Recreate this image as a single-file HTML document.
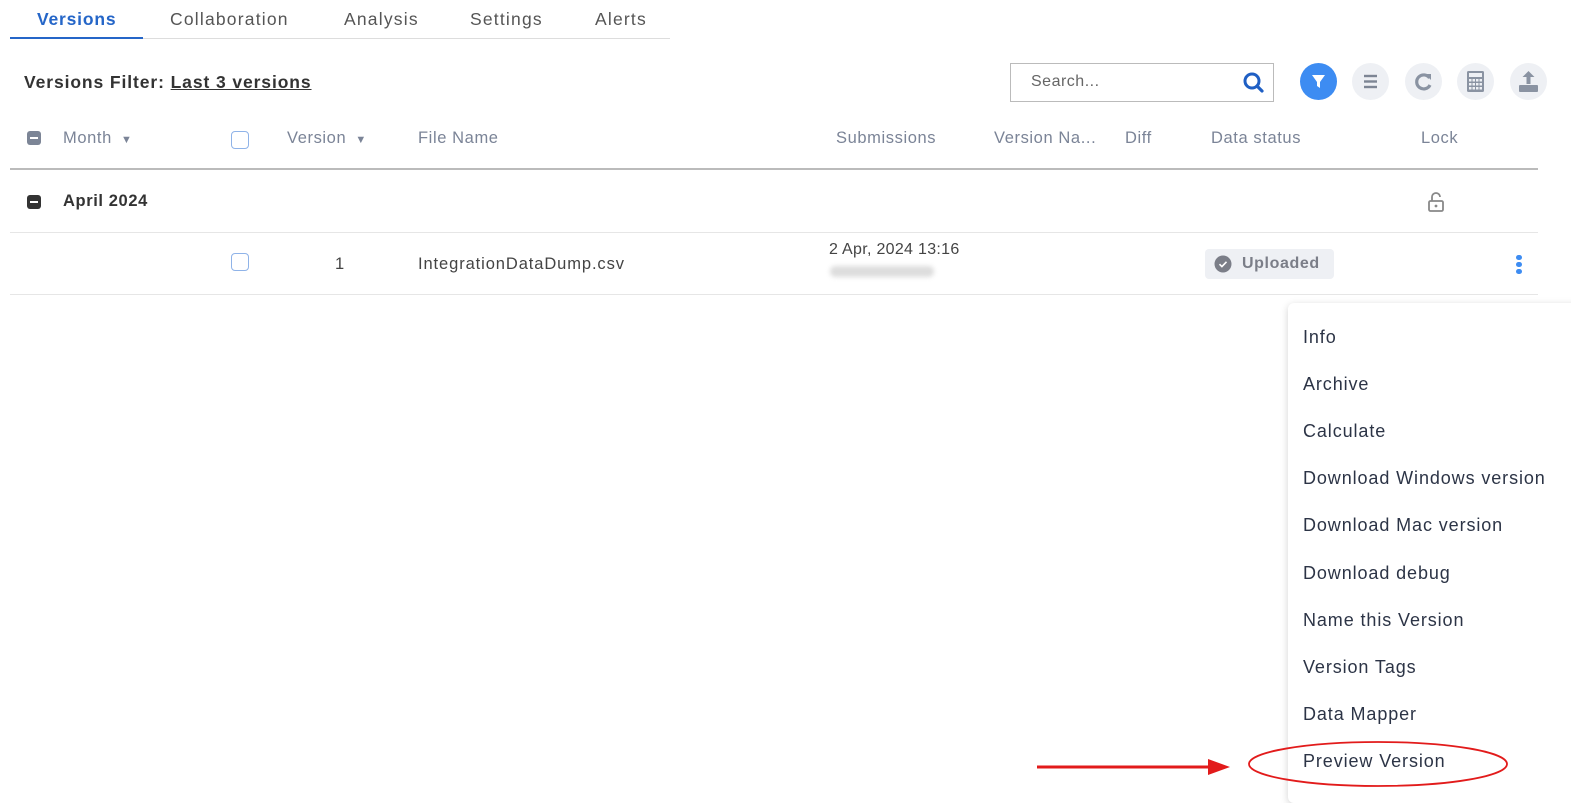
<!DOCTYPE html>
<html><head><meta charset="utf-8"><style>
*{margin:0;padding:0;box-sizing:border-box}
body{width:1571px;height:793px;background:#fff;font-family:"Liberation Sans",sans-serif;position:relative;overflow:hidden;color:#333}
.a{position:absolute;white-space:nowrap}
.tab{font-size:17.5px;color:#555;top:9px;letter-spacing:1.2px}
.hd{font-size:16.5px;color:#7b8497;top:129px;letter-spacing:0.6px}
.cb{position:absolute;width:18px;height:18px;border:1.5px solid #8fb3e8;border-radius:4px}
.ic{position:absolute;width:37px;height:37px;border-radius:50%;background:#eef0f4;top:63px}
.mi{position:absolute;left:1303px;font-size:18px;color:#2c3446;letter-spacing:0.9px}
.line{position:absolute;left:10px;width:1528px;height:1px;background:#e6e6e6}
</style></head><body>
<div class="a tab" style="left:37px;color:#2566c8;font-weight:bold;letter-spacing:0.8px">Versions</div>
<div class="a tab" style="left:170px">Collaboration</div>
<div class="a tab" style="left:344px">Analysis</div>
<div class="a tab" style="left:470px">Settings</div>
<div class="a tab" style="left:595px">Alerts</div>
<div class="a" style="left:10px;top:38px;width:660px;height:1px;background:#ddd"></div>
<div class="a" style="left:10px;top:37px;width:133px;height:2px;background:#2566c8"></div>

<div class="a" style="left:24px;top:72px;font-size:17.5px;font-weight:bold;color:#333;letter-spacing:0.9px">Versions Filter: <span style="text-decoration:underline">Last 3 versions</span></div>

<div class="a" style="left:1010px;top:63px;width:264px;height:39px;border:1px solid #bbb"></div>
<div class="a" style="left:1031px;top:73px;font-size:16px;color:#666;letter-spacing:0.5px">Search...</div>
<svg class="a" style="left:1242px;top:72px" width="24" height="22" viewBox="0 0 24 22"><circle cx="10" cy="9" r="7" fill="none" stroke="#1f5fc4" stroke-width="3"/><line x1="15" y1="14" x2="20" y2="19" stroke="#1f5fc4" stroke-width="3.2" stroke-linecap="round"/></svg>

<div class="ic" style="left:1300px;background:#3d8cf2"><svg width="37" height="37"><path d="M12 12h13l-5 7v6l-3-2v-4z" fill="#fff"/></svg></div>
<div class="ic" style="left:1352px"><svg width="37" height="37"><g stroke="#7d8594" stroke-width="2.4"><line x1="12" y1="13" x2="25" y2="13"/><line x1="12" y1="18.5" x2="25" y2="18.5"/><line x1="12" y1="24" x2="25" y2="24"/></g></svg></div>
<div class="ic" style="left:1405px"><svg width="37" height="37"><path d="M24.5 15 A7 7 0 1 0 25 22" fill="none" stroke="#8a93a2" stroke-width="3.2"/><path d="M20 11l6 0l0 6z" fill="#8a93a2"/></svg></div>
<div class="ic" style="left:1457px"><svg width="37" height="37"><rect x="10" y="8" width="17" height="21" rx="1.5" fill="#8a93a2"/><rect x="12" y="10" width="13" height="4" fill="#eef0f4"/><g fill="#eef0f4"><rect x="12" y="16" width="2.5" height="2.5"/><rect x="15.5" y="16" width="2.5" height="2.5"/><rect x="19" y="16" width="2.5" height="2.5"/><rect x="22.5" y="16" width="2.5" height="2.5"/><rect x="12" y="20" width="2.5" height="2.5"/><rect x="15.5" y="20" width="2.5" height="2.5"/><rect x="19" y="20" width="2.5" height="2.5"/><rect x="22.5" y="20" width="2.5" height="2.5"/><rect x="12" y="24" width="2.5" height="2.5"/><rect x="15.5" y="24" width="2.5" height="2.5"/><rect x="19" y="24" width="2.5" height="2.5"/><rect x="22.5" y="24" width="2.5" height="2.5"/></g></svg></div>
<div class="ic" style="left:1510px"><svg width="37" height="37"><path d="M18.5 8l-6 6h4v7h4v-7h4z" fill="#8a93a2"/><rect x="9" y="22" width="19" height="7" rx="1" fill="#8a93a2"/></svg></div>

<div class="a" style="left:27px;top:131px;width:14px;height:14px;background:#7c8596;border-radius:3px"><div style="position:absolute;left:3px;top:6px;width:8px;height:2px;background:#fff"></div></div>
<div class="a hd" style="left:63px">Month <span style="font-size:11px;margin-left:4px">▼</span></div>
<div class="cb" style="left:231px;top:131px"></div>
<div class="a hd" style="left:287px">Version <span style="font-size:11px;margin-left:4px">▼</span></div>
<div class="a hd" style="left:418px">File Name</div>
<div class="a hd" style="left:836px">Submissions</div>
<div class="a hd" style="left:994px">Version Na...</div>
<div class="a hd" style="left:1125px">Diff</div>
<div class="a hd" style="left:1211px">Data status</div>
<div class="a hd" style="left:1421px">Lock</div>
<div class="line" style="top:168px;height:2px;background:#bbb"></div>

<div class="a" style="left:27px;top:195px;width:14px;height:14px;background:#333;border-radius:3px"><div style="position:absolute;left:3px;top:6px;width:8px;height:2px;background:#fff"></div></div>
<div class="a" style="left:63px;top:192px;font-size:16.5px;font-weight:bold;color:#333;letter-spacing:0.6px">April 2024</div>
<svg class="a" style="left:1427px;top:191px" width="18" height="22" viewBox="0 0 18 22"><path d="M5 10V6a4 4 0 0 1 8 0" fill="none" stroke="#888" stroke-width="1.8"/><rect x="2" y="10" width="14" height="10" rx="1.5" fill="none" stroke="#888" stroke-width="1.8"/><circle cx="9" cy="15" r="1.4" fill="#888"/></svg>
<div class="line" style="top:232px"></div>

<div class="cb" style="left:231px;top:253px"></div>
<div class="a" style="left:335px;top:255px;font-size:16.5px;color:#444">1</div>
<div class="a" style="left:418px;top:255px;font-size:16.5px;color:#444;letter-spacing:0.9px">IntegrationDataDump.csv</div>
<div class="a" style="left:829px;top:241px;font-size:16px;color:#444;letter-spacing:0.3px">2 Apr, 2024 13:16</div>
<div class="a" style="left:830px;top:266px;width:104px;height:11px;background:#ddd;border-radius:5px;filter:blur(2.5px)"></div>
<div class="a" style="left:1205px;top:249px;width:129px;height:30px;background:#eef0f4;border-radius:4px"></div>
<svg class="a" style="left:1214px;top:255px" width="18" height="18"><circle cx="9" cy="9" r="8.5" fill="#7b7e88"/><path d="M5.5 9.2l2.4 2.4 4.6-4.8" fill="none" stroke="#fff" stroke-width="1.6"/></svg>
<div class="a" style="left:1242px;top:255px;font-size:16px;font-weight:bold;color:#7b7e88;letter-spacing:0.6px">Uploaded</div>
<div class="a" style="left:1516px;top:255px;width:6px;height:19px"><div style="width:6px;height:5px;background:#3d8cf2;border-radius:3px;margin-bottom:2px"></div><div style="width:6px;height:5px;background:#3d8cf2;border-radius:3px;margin-bottom:2px"></div><div style="width:6px;height:5px;background:#3d8cf2;border-radius:3px"></div></div>
<div class="line" style="top:294px"></div>

<div class="a" style="left:1288px;top:303px;width:300px;height:500px;background:#fff;border-radius:6px;box-shadow:0 2px 8px rgba(0,0,0,.18)"></div>
<div class="mi" style="top:327px">Info</div>
<div class="mi" style="top:374px">Archive</div>
<div class="mi" style="top:421px">Calculate</div>
<div class="mi" style="top:468px">Download Windows version</div>
<div class="mi" style="top:515px">Download Mac version</div>
<div class="mi" style="top:563px">Download debug</div>
<div class="mi" style="top:610px">Name this Version</div>
<div class="mi" style="top:657px">Version Tags</div>
<div class="mi" style="top:704px">Data Mapper</div>
<div class="mi" style="top:751px">Preview Version</div>

<svg class="a" style="left:0;top:0" width="1571" height="793"><line x1="1037" y1="767" x2="1210" y2="767" stroke="#e21b1b" stroke-width="3"/><path d="M1230 767l-22-8v16z" fill="#e21b1b"/><ellipse cx="1378" cy="764" rx="129" ry="22" fill="none" stroke="#e21b1b" stroke-width="1.8"/></svg>
</body></html>
